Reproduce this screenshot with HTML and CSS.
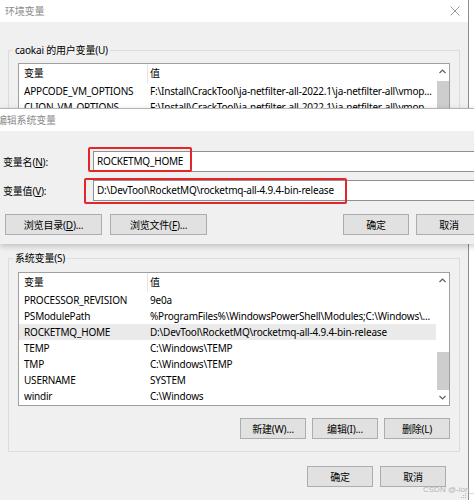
FILE: index.html
```html
<!DOCTYPE html>
<html lang="zh-CN">
<head>
<meta charset="utf-8">
<title>环境变量</title>
<link rel="stylesheet" href="styles.css">
</head>
<body>
<div class="screen">
  <div class="window">
    <div class="titlebar">
      <span class="title">环境变量</span>
      <svg class="close" width="10" height="10" viewBox="0 0 10 10"><path d="M0.5 0.5L9.5 9.5M9.5 0.5L0.5 9.5" stroke="#9a9a9a" stroke-width="1" fill="none"/></svg>
    </div>
    <div class="body">
      <fieldset class="group group-user">
        <legend>caokai 的用户变量(U)</legend>
        <div class="list list-user">
          <div class="rows">
            <div class="row head"><span class="c1">变量</span><span class="c2">值</span></div>
            <div class="row"><span class="c1">APPCODE_VM_OPTIONS</span><span class="c2">F:\Install\CrackTool\ja-netfilter-all-2022.1\ja-netfilter-all\vmop...</span></div>
            <div class="row"><span class="c1">CLION_VM_OPTIONS</span><span class="c2">F:\Install\CrackTool\ja-netfilter-all-2022.1\ja-netfilter-all\vmop...</span></div>
          </div>
          <div class="scroll scroll-user">
            <div class="arrow"><svg width="7" height="5" viewBox="0 0 7 5"><path d="M0.5 4L3.5 1L6.5 4" stroke="#606060" stroke-width="1.2" fill="none"/></svg></div>
            <div class="track"><div class="thumb"></div></div>
          </div>
        </div>
      </fieldset>

      <fieldset class="group group-sys">
        <legend>系统变量(S)</legend>
        <div class="list list-sys">
          <div class="rows">
            <div class="row head"><span class="c1">变量</span><span class="c2">值</span></div>
            <div class="row"><span class="c1">PROCESSOR_REVISION</span><span class="c2">9e0a</span></div>
            <div class="row"><span class="c1">PSModulePath</span><span class="c2">%ProgramFiles%\WindowsPowerShell\Modules;C:\Windows\...</span></div>
            <div class="row selected"><span class="c1">ROCKETMQ_HOME</span><span class="c2">D:\DevTool\RocketMQ\rocketmq-all-4.9.4-bin-release</span></div>
            <div class="row"><span class="c1">TEMP</span><span class="c2">C:\Windows\TEMP</span></div>
            <div class="row"><span class="c1">TMP</span><span class="c2">C:\Windows\TEMP</span></div>
            <div class="row"><span class="c1">USERNAME</span><span class="c2">SYSTEM</span></div>
            <div class="row"><span class="c1">windir</span><span class="c2">C:\Windows</span></div>
          </div>
          <div class="scroll scroll-sys">
            <div class="arrow"><svg width="7" height="5" viewBox="0 0 7 5"><path d="M0.5 4L3.5 1L6.5 4" stroke="#606060" stroke-width="1.2" fill="none"/></svg></div>
            <div class="track"><div class="thumb"></div></div>
            <div class="arrow"><svg width="7" height="5" viewBox="0 0 7 5"><path d="M0.5 1L3.5 4L6.5 1" stroke="#606060" stroke-width="1.2" fill="none"/></svg></div>
          </div>
        </div>
        <div class="btnrow">
          <button class="btn">新建(W)...</button>
          <button class="btn">编辑(I)...</button>
          <button class="btn">删除(L)</button>
        </div>
      </fieldset>

      <div class="footer">
        <button class="btn">确定</button>
        <button class="btn">取消</button>
      </div>
    </div>
    <div class="watermark">CSDN @-ion_</div>
    <svg class="grip" width="7" height="7" viewBox="0 0 7 7"><g fill="#b0b0b0"><rect x="5" y="1" width="1" height="1"/><rect x="3" y="3" width="1" height="1"/><rect x="5" y="3" width="1" height="1"/><rect x="1" y="5" width="1" height="1"/><rect x="3" y="5" width="1" height="1"/><rect x="5" y="5" width="1" height="1"/></g></svg>
  </div>
  <div class="strip"></div>

  <div class="dialog">
    <div class="dialog-title">编辑系统变量</div>
    <div class="dialog-body">
      <div class="field">
        <label class="field-label">变量名(<u>N</u>):</label>
        <div class="input">ROCKETMQ_HOME</div>
      </div>
      <div class="field field-2">
        <label class="field-label">变量值(<u>V</u>):</label>
        <div class="input">D:\DevTool\RocketMQ\rocketmq-all-4.9.4-bin-release</div>
      </div>
      <div class="dialog-btns">
        <button class="btn btn-wide">浏览目录(<u>D</u>)...</button>
        <button class="btn btn-wide">浏览文件(<u>F</u>)...</button>
        <button class="btn btn-ok">确定</button>
        <button class="btn">取消</button>
      </div>
    </div>
    <div class="mark mark-name"></div>
    <div class="mark mark-value"></div>
  </div>
</div>
</body>
</html>
```

FILE: styles.css
```css
* { box-sizing: border-box; }
html, body { margin: 0; padding: 0; }
body {
  width: 474px;
  height: 500px;
  overflow: hidden;
  background: #ffffff;
  font-family: "Noto Sans", "Noto Sans CJK SC", sans-serif;
  font-size: 10px;
  letter-spacing: -0.2px;
  color: #000;
}
.screen { display: flex; height: 500px; position: relative; }
.window {
  width: 469px;
  height: 500px;
  background: #f0f0f0;
  border-right: 1px solid #8c8c8c;
  position: relative;
}
.strip { flex: 1; background: #ffffff; }

.titlebar {
  height: 22px;
  background: #ffffff;
  display: flex;
  align-items: center;
  justify-content: space-between;
  padding: 0 8px 0 5px;
}
.title { color: #8c8c8c; line-height: 1; }
.close { display: block; }

.body { padding-left: 8px; }

.group {
  margin: 0;
  width: 452px;
  border: 1px solid #dcdcdc;
  min-width: 0;
}
.group legend {
  padding: 0 2px;
  margin-left: -5px;
  line-height: 16px;
  height: 16px;
}
.group-user { margin-top: 20px; padding: 5px 9px 10px; }
.group-sys { margin-top: 16px; padding: 6px 9px 12px; }

.list {
  display: flex;
  background: #ffffff;
  border: 1px solid #a0a0a0;
}
.list-user { height: 160px; }
.list-sys { height: 134px; }
.rows { flex: 1; min-width: 0; overflow: hidden; }
.row {
  display: flex;
  height: 16px;
  line-height: 16px;
  white-space: nowrap;
}
.row.head { height: 19px; line-height: 19px; }
.row .c1 { width: 129px; flex: none; padding-left: 5px; overflow: hidden; }
.row.head .c1 { border-right: 1px solid #e5e5e5; }
.row .c2 { flex: 1; min-width: 0; padding-left: 2px; overflow: hidden; text-overflow: ellipsis; }
.row.selected { background: #eaeaea; }

.scroll { width: 13px; display: flex; flex-direction: column; }
.arrow { height: 15px; display: flex; align-items: center; justify-content: center; flex: none; }
.arrow svg { display: block; }
.track { flex: 1; display: flex; flex-direction: column; align-items: flex-end; }
.thumb { width: 12px; background: #cdcdcd; }
.scroll-user .thumb { margin-top: 2px; height: 120px; }
.scroll-sys .thumb { margin-top: 64px; height: 38px; }

.btn {
  display: flex;
  align-items: center;
  justify-content: center;
  width: 66px;
  height: 21px;
  padding: 0;
  background: #e1e1e1;
  border: 1px solid #adadad;
  font-family: inherit;
  font-size: 10px;
  letter-spacing: -0.2px;
  color: #000;
  line-height: 1;
}
.btnrow {
  display: flex;
  justify-content: flex-end;
  gap: 6px;
  margin-top: 12px;
}
.footer {
  display: flex;
  justify-content: flex-end;
  gap: 7px;
  margin-top: 14px;
  padding-right: 22px;
}

.watermark {
  position: absolute;
  left: 423px;
  top: 485px;
  white-space: nowrap;
  font-family: "Liberation Sans", sans-serif;
  font-size: 8px;
  line-height: 10px;
  letter-spacing: 0;
  color: #b4b4b4;
}
.grip { position: absolute; right: 1px; bottom: 1px; }

.dialog {
  position: absolute;
  top: 108px;
  left: 0;
  width: 490px;
  height: 136px;
  background: #f0f0f0;
  border-top: 1px solid #b4b4b4;
  box-shadow: 0 2px 6px rgba(0, 0, 0, 0.22);
}
.dialog-title {
  height: 22px;
  line-height: 22px;
  background: #ffffff;
  color: #8c8c8c;
  margin-left: -3px;
}
.dialog-body { padding: 20px 8px 9px 0; }
.field { display: flex; align-items: center; height: 21px; }
.field-2 { margin-top: 8px; }
.field-label { width: 93px; flex: none; padding-left: 3px; }
.input {
  flex: 1;
  height: 21px;
  line-height: 19px;
  background: #ffffff;
  border: 1px solid #8f8f8f;
  border-right: none;
  padding-left: 3px;
  white-space: nowrap;
}
.dialog-btns { display: flex; margin-top: 13px; padding-left: 5px; gap: 7px; }
.btn-wide { width: 97px; }
.btn-wide + .btn-wide { margin-left: 1px; }
.btn-ok { margin-left: auto; }

.mark {
  position: absolute;
  border: 2px solid #e3262c;
  border-radius: 2px;
}
.mark-name { left: 88px; top: 38px; width: 104px; height: 25px; }
.mark-value { left: 84px; top: 69px; width: 263px; height: 26px; }
```
